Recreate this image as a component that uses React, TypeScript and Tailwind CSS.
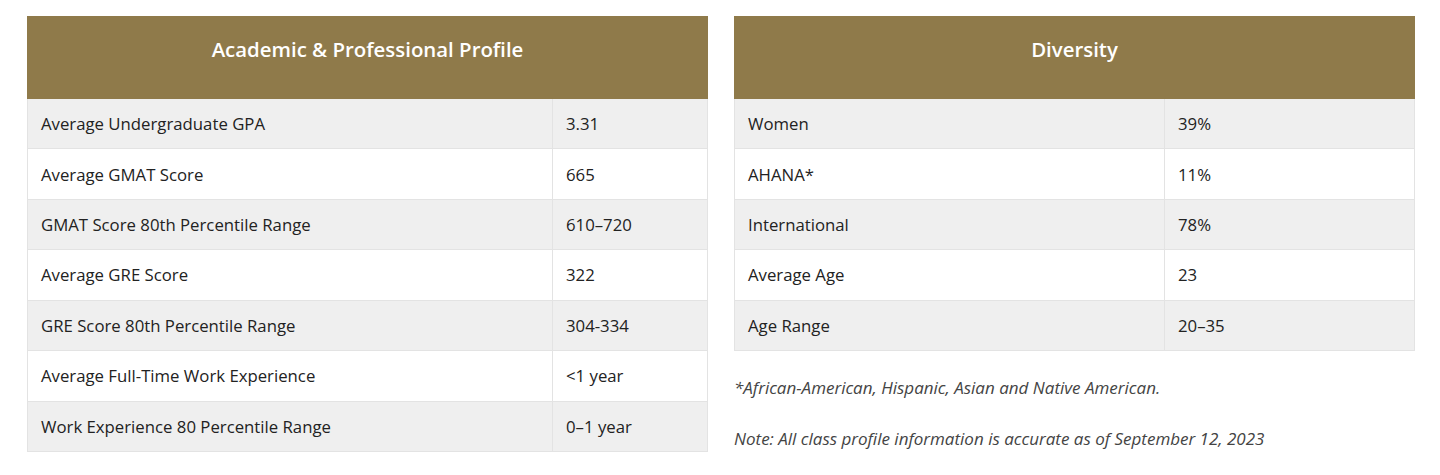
import React from "react";

const left: [string, string][] = [
  ["Average Undergraduate GPA", "3.31"],
  ["Average GMAT Score", "665"],
  ["GMAT Score 80th Percentile Range", "610–720"],
  ["Average GRE Score", "322"],
  ["GRE Score 80th Percentile Range", "304-334"],
  ["Average Full-Time Work Experience", "<1 year"],
  ["Work Experience 80 Percentile Range", "0–1 year"],
];

const right: [string, string][] = [
  ["Women", "39%"],
  ["AHANA*", "11%"],
  ["International", "78%"],
  ["Average Age", "23"],
  ["Age Range", "20–35"],
];

function Table({ title, rows, col1 }: { title: string; rows: [string, string][]; col1: string }) {
  return (
    <table className="w-full border-collapse table-fixed">
      <colgroup>
        <col className={col1} />
        <col />
      </colgroup>
      <thead>
        <tr>
          <th colSpan={2} className="bg-[#8f7a4a] text-white text-[20.4px] leading-[28px] font-semibold p-0 pt-[18px] pb-[35px] text-center align-top border border-[#8f7a4a]">
            {title}
          </th>
        </tr>
      </thead>
      <tbody>
        {rows.map(([a, b], i) => (
          <tr key={a} className={i % 2 === 0 ? "bg-[#efefef]" : "bg-white"}>
            <td className="h-[50.45px] p-0 border border-[#e3e3e3] pl-[13px] text-[16.75px] text-[#222] align-middle">{a}</td>
            <td className="h-[50.45px] p-0 border border-[#e3e3e3] pl-[13px] text-[16.75px] text-[#222] align-middle">{b}</td>
          </tr>
        ))}
      </tbody>
    </table>
  );
}

export default function App() {
  return (
    <div className="bg-white min-h-[475px] px-[27px] pt-[16px] flex gap-[26px]" style={{ fontFamily: '"Open Sans", sans-serif' }}>
      <div className="w-[681px] shrink-0">
        <Table title="Academic & Professional Profile" rows={left} col1="w-[525px]" />
      </div>
      <div className="w-[681px] shrink-0">
        <Table title="Diversity" rows={right} col1="w-[430px]" />
        <p className="mt-[24px] text-[17px] leading-[26px] italic text-[#444]">*African-American, Hispanic, Asian and Native American.</p>
        <p className="mt-[25px] text-[17px] leading-[26px] italic text-[#444]">Note: All class profile information is accurate as of September 12, 2023</p>
      </div>
    </div>
  );
}
